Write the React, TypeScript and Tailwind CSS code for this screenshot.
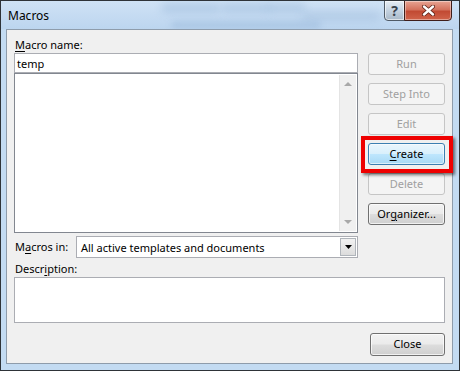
import React from 'react';

const font = { fontFamily: '"Noto Sans", "Open Sans", "DejaVu Sans", sans-serif' };

function SideButton({ label, disabled, hot, underline }: { label: string; disabled?: boolean; hot?: boolean; underline?: number }) {
  const text =
    underline === undefined ? (
      label
    ) : (
      <>
        {label.slice(0, underline)}
        <span className="underline underline-offset-2">{label[underline]}</span>
        {label.slice(underline + 1)}
      </>
    );
  if (disabled) {
    return (
      <div className="flex h-[22px] w-[77px] items-center justify-center rounded-[3px] border border-[#c5c5c5] bg-[#f4f4f4] text-[#a0a0a0]">
        {text}
      </div>
    );
  }
  if (hot) {
    return (
      <div className="flex h-[22px] w-[77px] items-center justify-center rounded-[3px] border border-[#3c7fb1] bg-[linear-gradient(#eaf6fd_0%,#d9f0fc_48%,#bee6fd_52%,#a7d9f5_100%)] text-black shadow-[inset_0_0_0_1px_rgba(255,255,255,0.6)]">
        {text}
      </div>
    );
  }
  return (
    <div className="flex h-[22px] w-[77px] items-center justify-center rounded-[3px] border border-[#707070] bg-[linear-gradient(#f2f2f2_0%,#ebebeb_48%,#dddddd_52%,#cfcfcf_100%)] text-black shadow-[inset_0_0_0_1px_rgba(255,255,255,0.7)]">
      {text}
    </div>
  );
}

export default function App() {
  return (
    <div className="flex h-[371px] w-[460px] flex-col border border-[#2e3338] bg-[#c3dbf2] text-black" style={font}>
      {/* title bar */}
      <div className="relative flex h-[28px] items-start justify-between overflow-hidden bg-[linear-gradient(#cfe2f5,#bcd5ef)]">
        <div className="pointer-events-none absolute left-[160px] top-[2px] h-[10px] w-[60px] rounded-full bg-[#8fb0d4] opacity-40 blur-[4px]"></div>
        <div className="pointer-events-none absolute left-[220px] top-[2px] h-[10px] w-[50px] rounded-full bg-[#8fb0d4] opacity-40 blur-[4px]"></div>
        <div className="pointer-events-none absolute left-[265px] top-[2px] h-[10px] w-[40px] rounded-full bg-[#8fb0d4] opacity-40 blur-[4px]"></div>
        <div className="pointer-events-none absolute left-[300px] top-[10px] h-[10px] w-[80px] rounded-full bg-[#9ab7d8] opacity-40 blur-[4px]"></div>
        <div className="pointer-events-none absolute left-[170px] top-[20px] h-[8px] w-[150px] rounded-full bg-[#8fb0d4] opacity-40 blur-[3px]"></div>
        <span className="relative self-center pl-[7px] pt-px text-[12px] leading-none">Macros</span>
        <div className="relative -mt-px mr-[7px] flex">
          <div className="flex h-[21px] w-[21px] items-center justify-center rounded-bl-[4px] border border-[#4f5a66] bg-[linear-gradient(#e6edf4,#c4d2e0_50%,#a9b9c9)] text-[14px] font-bold leading-none text-[#39424c] shadow-[inset_0_0_0_1px_rgba(255,255,255,0.6)]">
            ?
          </div>
          <div className="-ml-px flex h-[21px] w-[48px] items-center justify-center rounded-br-[4px] border border-[#3f1e1a] bg-[linear-gradient(#e8a493,#d4725d_45%,#c24a33_55%,#d0634a)] shadow-[inset_0_0_0_1px_rgba(255,255,255,0.4)]">
            <svg width="13" height="11" viewBox="0 0 13 11">
              <path d="M2 1.5 L11 9.5 M11 1.5 L2 9.5" stroke="#5a1f14" strokeWidth="4" strokeLinecap="round" />
              <path d="M2 1.5 L11 9.5 M11 1.5 L2 9.5" stroke="#ffffff" strokeWidth="2.4" strokeLinecap="round" />
            </svg>
          </div>
        </div>
      </div>

      {/* client area */}
      <div className="mx-[5px] mb-[6px] mr-[6px] flex h-[335px] flex-col border border-[#8e9cab] bg-[#f0f0f0] px-[7px] text-[11px]">
        <div className="flex gap-[10px]">
          <div className="flex w-[344px] flex-col">
            <div className="h-[23px] pl-px pt-[6px] leading-[17px]">
              <span className="underline underline-offset-2">M</span>acro name:
            </div>
            <div className="flex h-[20px] items-center border border-[#abadb3] bg-white px-[2px] leading-none">temp</div>
            <div className="flex h-[160px] border border-[#828790] bg-white">
              <div className="flex-1"></div>
              <div className="my-px mr-px flex w-[17px] flex-col items-center justify-between border-l border-[#e4e4e4] bg-[#f0f0f0] py-[6px]">
                <svg width="8" height="5" viewBox="0 0 8 5">
                  <path d="M0 5 L4 1 L8 5 Z" fill="#a8a8a8" />
                </svg>
                <svg width="8" height="5" viewBox="0 0 8 5">
                  <path d="M0 0 L4 4 L8 0 Z" fill="#a8a8a8" />
                </svg>
              </div>
            </div>
            <div className="mt-[3px] flex h-[22px] items-center">
              <div className="w-[62px] pl-px">
                M<span className="underline underline-offset-2">a</span>cros in:
              </div>
              <div className="flex h-[22px] flex-1 items-center border border-[#abadb3] bg-white">
                <span className="flex-1 pl-[4px] leading-none">All active templates and documents</span>
                <div className="mr-px flex h-[18px] w-[16px] items-center justify-center border border-[#b0b5bb] bg-[linear-gradient(#f2f2f2,#dcdcdc)]">
                  <svg width="7" height="4" viewBox="0 0 7 4">
                    <path d="M0 0 L7 0 L3.5 4 Z" fill="#000" />
                  </svg>
                </div>
              </div>
            </div>
          </div>
          <div className="relative flex flex-col gap-[8px] pt-[23px]">
            <SideButton label="Run" disabled />
            <SideButton label="Step Into" disabled />
            <SideButton label="Edit" disabled />
            <SideButton label="Create" hot underline={0} />
            <SideButton label="Delete" disabled />
            <SideButton label="Organizer..." underline={2} />
            <div className="pointer-events-none absolute left-[-7px] top-[106px] h-[37px] w-[92px] border-[4px] border-[#ee0000] shadow-[2px_2px_3px_rgba(0,0,0,0.55)]"></div>
          </div>
        </div>
        <div className="h-[19px] pl-px pt-[2px] leading-[17px]">
          Descr<span className="underline underline-offset-2">i</span>ption:
        </div>
        <div className="h-[46px] border border-[#abadb3] bg-white"></div>
        <div className="mt-[10px] flex justify-end">
          <div className="flex h-[23px] w-[75px] items-center justify-center rounded-[3px] border border-[#707070] bg-[linear-gradient(#f2f2f2_0%,#ebebeb_48%,#dddddd_52%,#cfcfcf_100%)] shadow-[inset_0_0_0_1px_rgba(255,255,255,0.7)]">
            Close
          </div>
        </div>
      </div>
    </div>
  );
}
